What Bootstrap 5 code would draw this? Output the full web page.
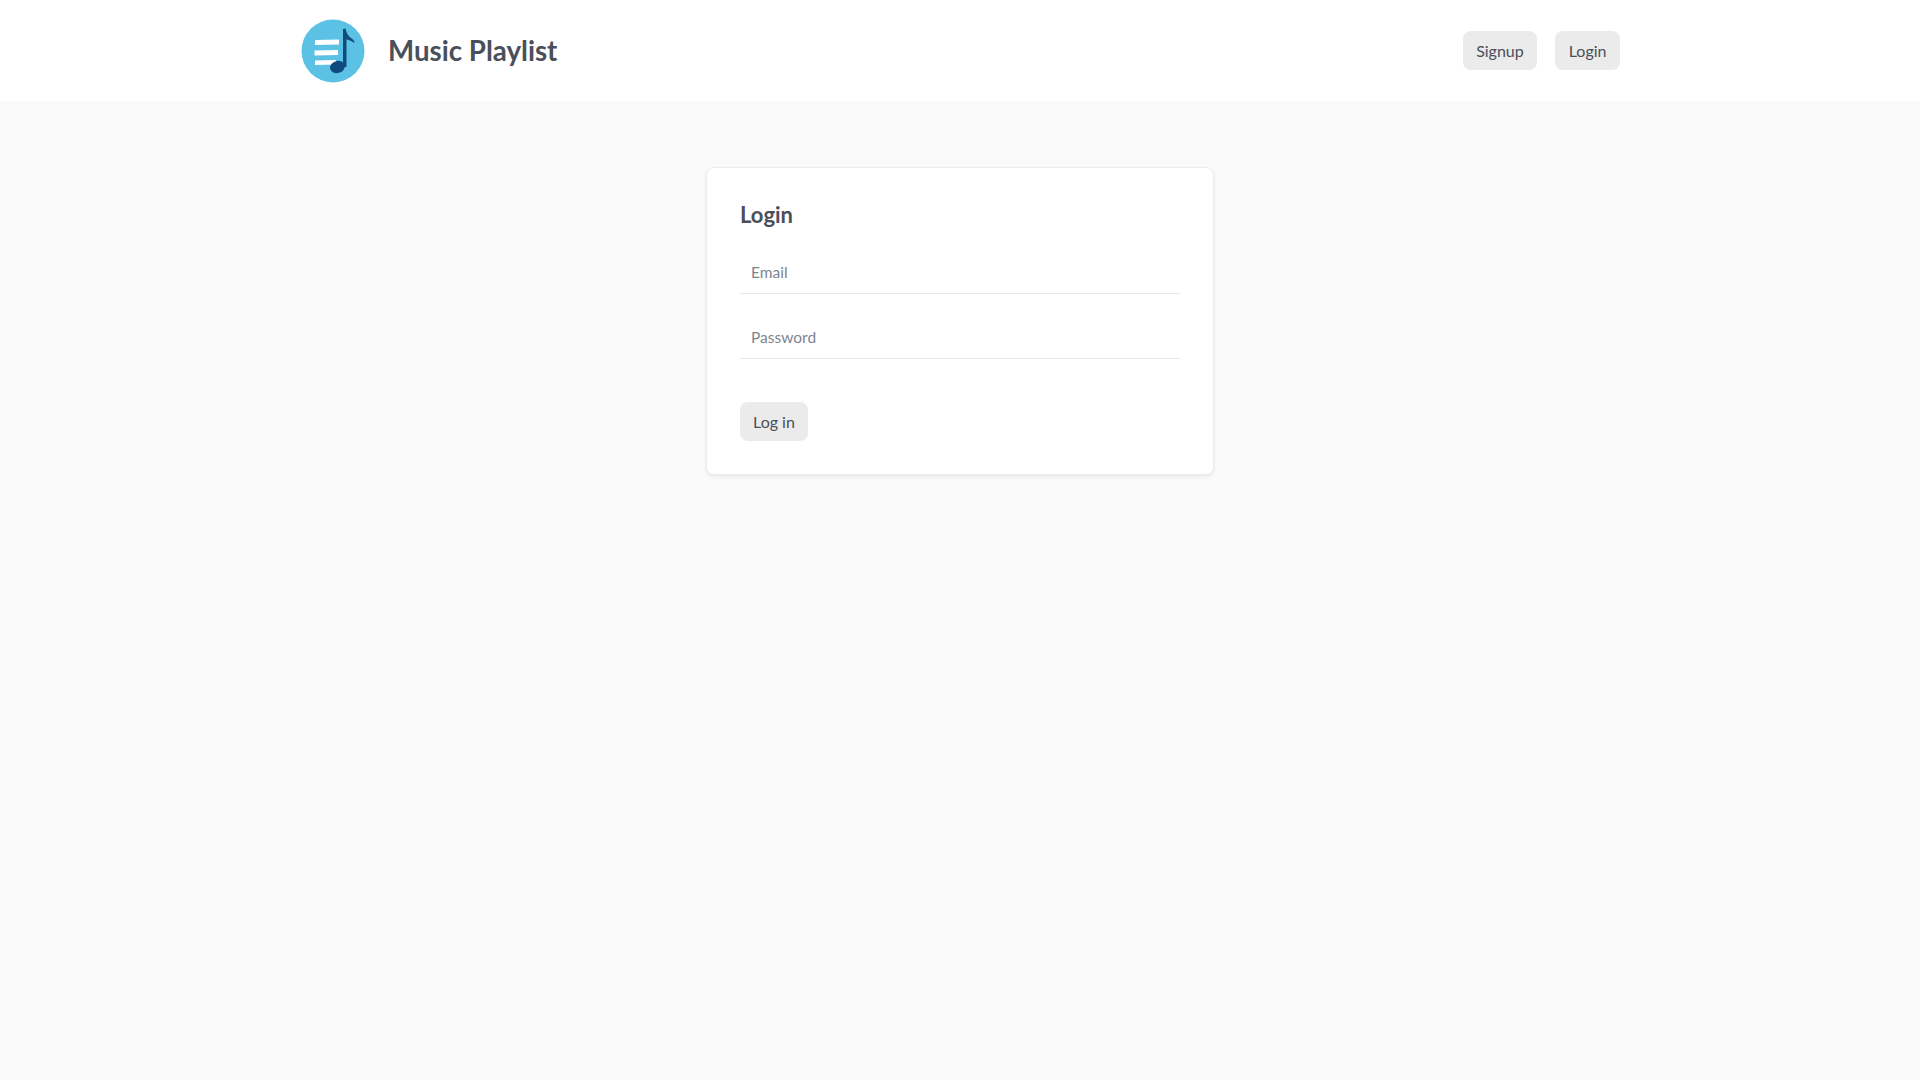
<!doctype html>
<html lang="en">
<head>
<meta charset="utf-8">
<title>Music Playlist</title>
<link href="https://cdn.jsdelivr.net/npm/bootstrap@5.3.0/dist/css/bootstrap.min.css" rel="stylesheet">
<style>
body{background:#fafafa;font-family:"Lato","Noto Sans",sans-serif;color:#4a4f5a;min-height:1080px}
.top-bar{background:#fff;height:101px}
.top-inner{width:1320px;padding-left:1px}
.brand-name{font-size:27.7px;font-weight:700;color:#4a4f5a;margin-left:23px;line-height:1;padding-top:1px}
.soft-btn{background:#ebebeb;border:0;border-radius:8px;color:#4a4f5a;font-size:16px;height:39px;padding:0 13.5px;line-height:39px}
.soft-btn:hover{background:#e2e2e2;color:#4a4f5a}
.login-panel{width:508px;margin-top:66px;height:308px;background:#fff;border:1px solid #ececec;border-radius:8px;box-shadow:0 2px 4px rgba(0,0,0,.07);padding:33px}
.panel-title{font-size:22px;font-weight:700;line-height:28px;margin:0 0 21px}
.line-input{border:0;border-bottom:1px solid #e8e8e8;border-radius:0;height:44px;padding:0 11px;font-size:15.5px;background:transparent;margin-bottom:21px}
.line-input::placeholder{color:#7d8590}
.line-input:focus{box-shadow:none;border-color:#ccc}
.submit-gap{margin-top:22px;padding:0 13px}
.nav-gap{gap:18px}
</style>
</head>
<body>
<header class="top-bar d-flex justify-content-center">
  <div class="top-inner d-flex align-items-center justify-content-between">
    <a class="d-flex align-items-center text-decoration-none" href="#">
      <svg width="64" height="64" viewBox="0 0 64 64" aria-hidden="true">
        <circle cx="32" cy="32" r="31.5" fill="#5bc2e5"/>
        <path d="M14 21 38 20.500v5L14 26zM13.500 31.500 37 31v5L13.500 36.500zM14 41.500 35 41v4.500L14 46z" fill="#fff"/>
        <ellipse cx="36.500" cy="48" rx="7.500" ry="6" fill="#0f4c7d" transform="rotate(-15 36.500 48)"/>
        <path d="M42 48V10l2.500 -.5c1 5 3 7.500 5.500 9.500 2 1.500 3.500 2.500 3.500 5-3-2-5-3-8-3.500V48z" fill="#0f4c7d"/>
      </svg>
      <span class="brand-name">Music Playlist</span>
    </a>
    <nav class="d-flex nav-gap">
      <a class="btn soft-btn" href="#">Signup</a>
      <a class="btn soft-btn" href="#">Login</a>
    </nav>
  </div>
</header>
<main class="d-flex justify-content-center">
  <form class="login-panel">
    <h1 class="panel-title">Login</h1>
    <input class="form-control line-input" type="email" placeholder="Email">
    <input class="form-control line-input" type="password" placeholder="Password">
    <button class="btn soft-btn submit-gap" type="button">Log in</button>
  </form>
</main>
<script src="https://cdn.jsdelivr.net/npm/bootstrap@5.3.0/dist/js/bootstrap.bundle.min.js"></script>
</body>
</html>
